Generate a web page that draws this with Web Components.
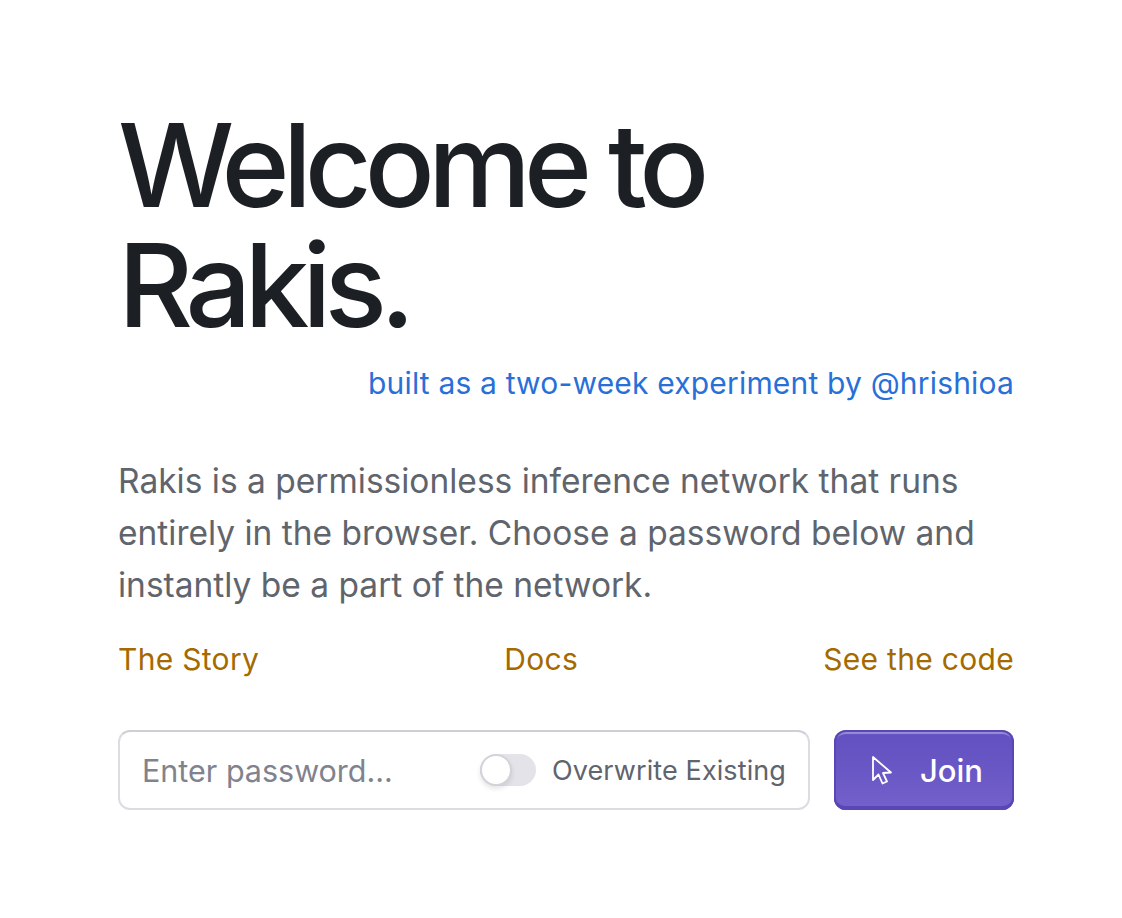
<!DOCTYPE html>
<html>
<head>
<meta charset="utf-8">
<title>Rakis</title>
<style>
  html, body { margin: 0; background: #fff; }
  body { font-family: Inter, "Liberation Sans", sans-serif; }
</style>
</head>
<body>
<rakis-welcome>
  <welcome-hero title="Welcome to Rakis." by="built as a two-week experiment by @hrishioa"></welcome-hero>
  <p slot="intro">Rakis is a permissionless inference network that runs entirely in the browser. Choose a password below and instantly be a part of the network.</p>
  <link-row slot="links">
    <a href="#">The Story</a>
    <a href="#">Docs</a>
    <a href="#">See the code</a>
  </link-row>
  <join-form slot="form"></join-form>
</rakis-welcome>

<script>
class RakisWelcome extends HTMLElement {
  connectedCallback() {
    const shadowRoot = this.attachShadow({ mode: "open" });
    shadowRoot.innerHTML = `
    <style>
    :host {
      display: block;
      box-sizing: border-box;
      width: 896px;
      margin-left: 118px;
      padding-top: 105px;
    }
    ::slotted(p) {
      margin: 0;
      padding-top: 54px;
      color: #60646c;
      font-size: 33.5px;
      line-height: 52px;
    }
    ::slotted(link-row) {
      margin-top: 30px;
    }
    ::slotted(join-form) {
      margin-top: 53px;
    }
    </style>
    <slot></slot>
    <slot name="intro"></slot>
    <slot name="links"></slot>
    <slot name="form"></slot>
  `;
  }
}

class WelcomeHero extends HTMLElement {
  connectedCallback() {
    const shadowRoot = this.attachShadow({ mode: "open" });
    shadowRoot.innerHTML = `
    <style>
    :host {
      display: block;
    }
    .title {
      color: #1c2024;
      font-size: 116px;
      font-weight: 500;
      letter-spacing: -7px;
      word-spacing: -1px;
      line-height: 120px;
      margin: 0;
      max-width: 700px;
    }
    .by {
      color: #2870d8;
      font-size: 30px;
      line-height: 36px;
      letter-spacing: 0.18px;
      margin-top: 20px;
      text-align: right;
    }
    </style>
    <h1 class="title">${this.getAttribute("title")}</h1>
    <div class="by">${this.getAttribute("by")}</div>
  `;
  }
}

class LinkRow extends HTMLElement {
  connectedCallback() {
    const shadowRoot = this.attachShadow({ mode: "open" });
    shadowRoot.innerHTML = `
    <style>
    :host {
      display: flex;
      justify-content: space-between;
      font-size: 30px;
      line-height: 36px;
      letter-spacing: 0.3px;
    }
    ::slotted(a) {
      color: #a46a00;
      text-decoration: none;
    }
    </style>
    <slot></slot>
  `;
  }
}

class ToggleSwitch extends HTMLElement {
  connectedCallback() {
    const shadowRoot = this.attachShadow({ mode: "open" });
    shadowRoot.innerHTML = `
    <style>
    :host {
      display: block;
      flex: none;
      width: 56px;
      height: 32px;
      border-radius: 16px;
      background: #e3e3e9;
    }
    .thumb {
      box-sizing: border-box;
      width: 32px;
      height: 32px;
      border-radius: 50%;
      background: #fff;
      border: 2px solid #d3d4da;
      box-shadow: 0 3px 5px rgba(0, 0, 0, 0.1);
    }
    </style>
    <div class="thumb"></div>
  `;
  }
}

class JoinButton extends HTMLElement {
  connectedCallback() {
    const shadowRoot = this.attachShadow({ mode: "open" });
    shadowRoot.innerHTML = `
    <style>
    :host {
      display: flex;
      align-items: center;
      gap: 27px;
      box-sizing: border-box;
      width: 180px;
      height: 80px;
      padding-left: 37px;
      flex: none;
      border-radius: 12px;
      color: #fff;
      font-size: 31px;
      font-weight: 500;
      background: linear-gradient(180deg, #6250c0 0%, #6a58c6 55%, #7561ca 100%);
      box-shadow: inset 0 0 0 2px #5a46b4, inset 0 5px 1px -1px rgba(255, 255, 255, 0.35), inset 0 -4px 0 #5a46b4;
    }
    svg {
      display: block;
    }
    </style>
    <svg width="22" height="30" viewBox="0 0 22 30" fill="none" stroke="#fff" stroke-width="1.8" stroke-linejoin="round">
      <path d="M2 2 L2 25 L7.5 19.5 L11.5 28.5 L16 26.5 L12 18 L20 17.5 Z"/>
    </svg>
    <slot></slot>
  `;
  }
}

class JoinForm extends HTMLElement {
  connectedCallback() {
    const shadowRoot = this.attachShadow({ mode: "open" });
    shadowRoot.innerHTML = `
    <style>
    :host {
      display: flex;
      gap: 24px;
    }
    .field {
      flex: 1;
      box-sizing: border-box;
      height: 80px;
      display: flex;
      align-items: center;
      gap: 16px;
      padding: 0 22px;
      background: #fff;
      border: 2px solid #dcdde2;
      border-top-color: #cdced6;
      border-radius: 12px;
    }
    .placeholder {
      flex: 1;
      color: #80838d;
      font-size: 30.5px;
    }
    .overwrite {
      color: #60646c;
      font-size: 27px;
      letter-spacing: 0.1px;
    }
    </style>
    <div class="field">
      <span class="placeholder">Enter password...</span>
      <toggle-switch></toggle-switch>
      <span class="overwrite">Overwrite Existing</span>
    </div>
    <join-button>Join</join-button>
  `;
  }
}

window.customElements.define("rakis-welcome", RakisWelcome);
window.customElements.define("welcome-hero", WelcomeHero);
window.customElements.define("link-row", LinkRow);
window.customElements.define("toggle-switch", ToggleSwitch);
window.customElements.define("join-button", JoinButton);
window.customElements.define("join-form", JoinForm);
</script>
</body>
</html>
